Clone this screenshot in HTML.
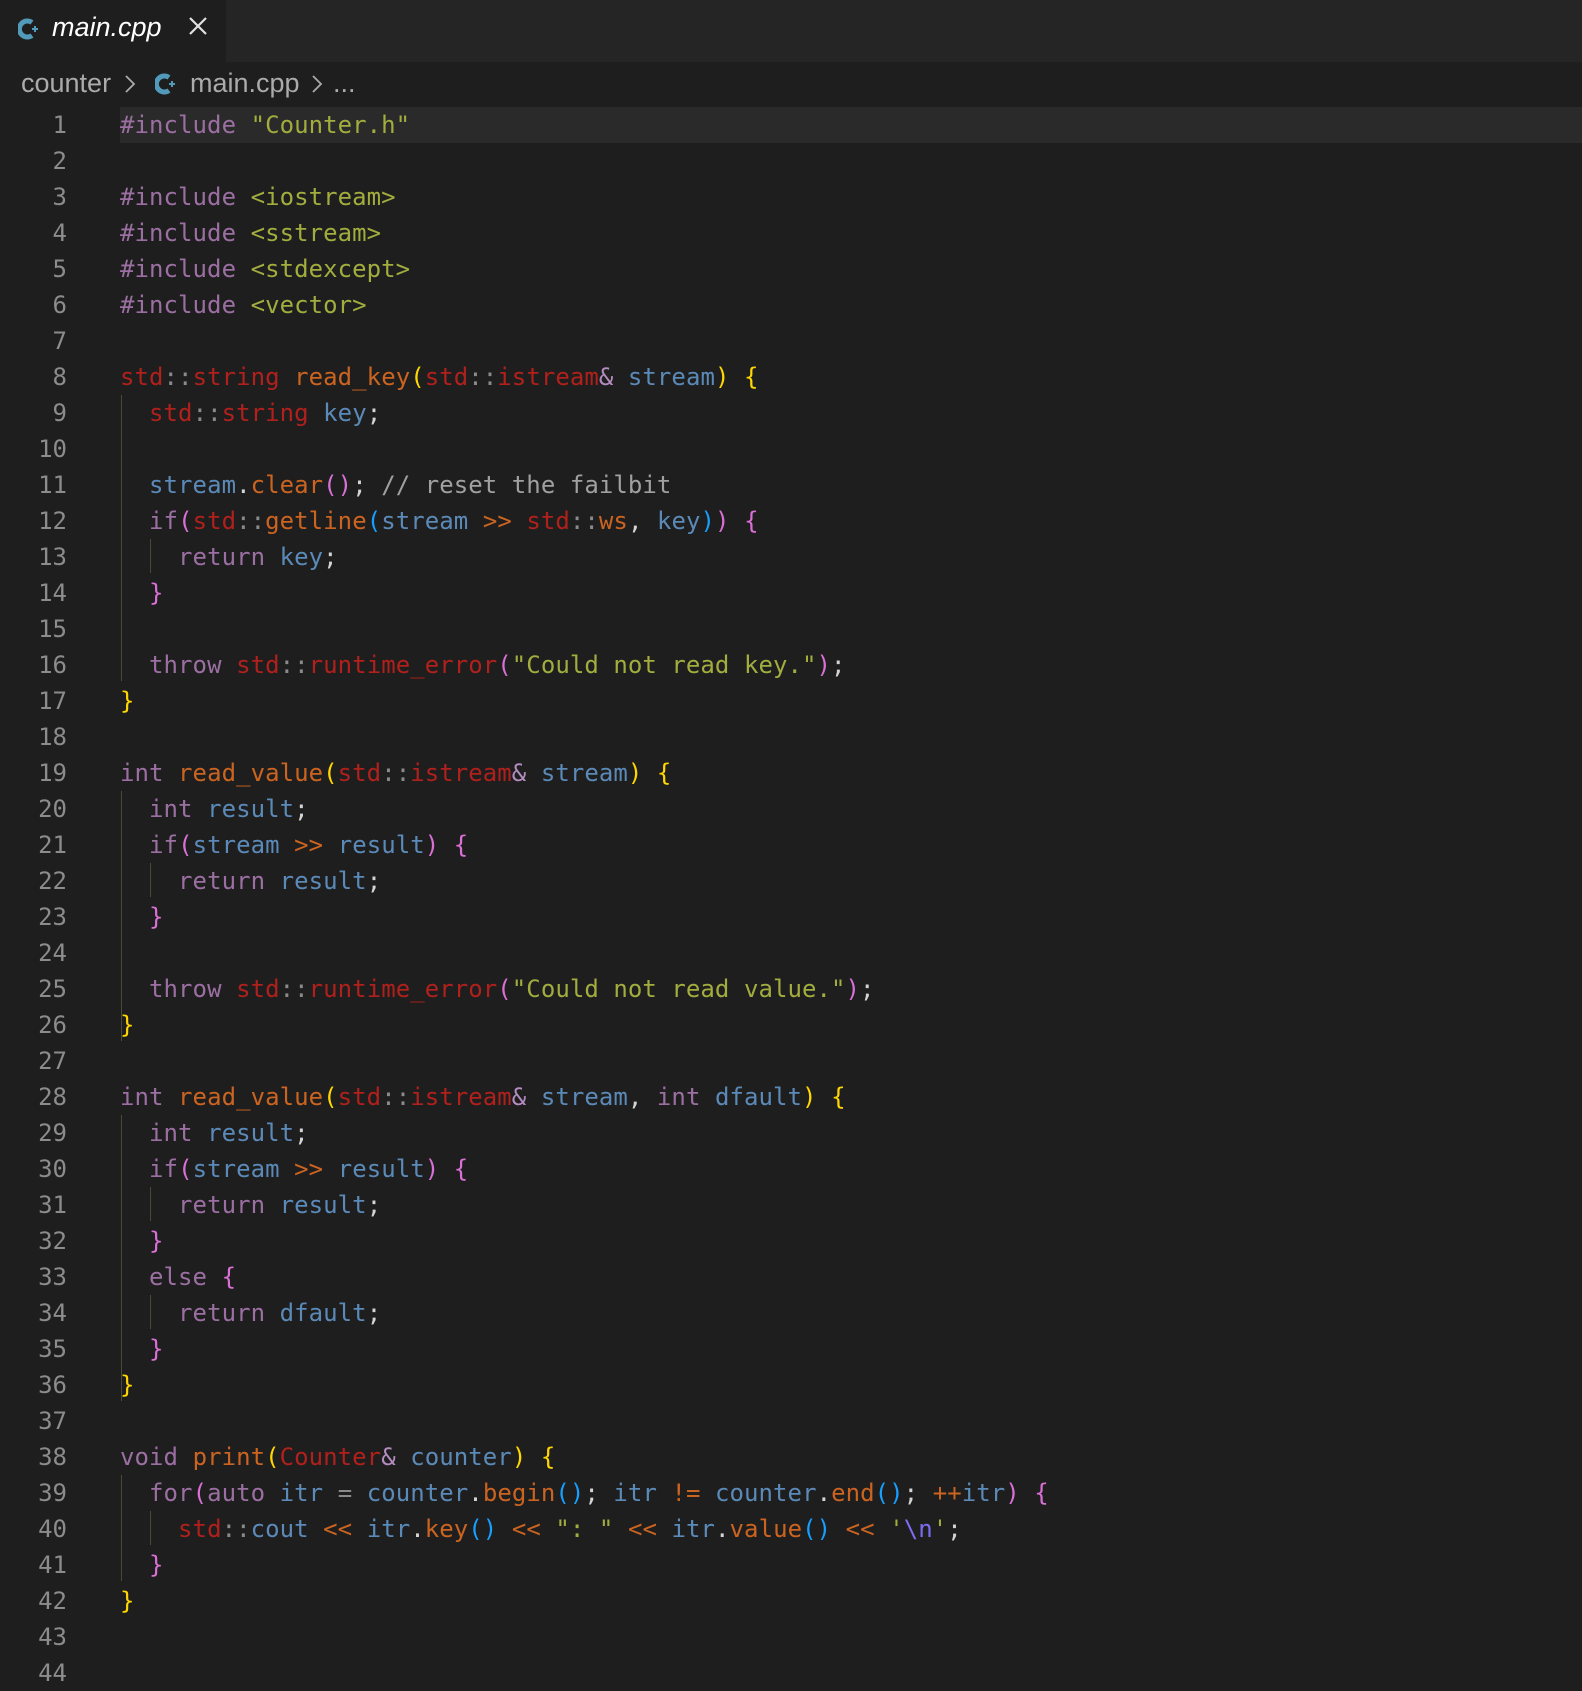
<!DOCTYPE html>
<html><head><meta charset="utf-8"><style>
*{margin:0;padding:0;box-sizing:border-box}
html,body{width:1582px;height:1680px;background:#1e1e1e;overflow:hidden}
.tabs{position:absolute;left:0;top:0;width:1582px;height:62px;background:#252526}
.tab{position:absolute;left:0;top:0;width:226px;height:62px;background:#1e1e1e}
.tab .name{position:absolute;left:52px;top:12px;font:italic 27px "Liberation Sans",sans-serif;color:#fff}
.tab .x{position:absolute;left:186px;top:14px;width:24px;height:24px}
.bc{position:absolute;top:68px;font:27px "Liberation Sans",sans-serif;color:#ababab;white-space:pre}
.ln{position:absolute;left:0;width:67px;text-align:right;font:24px "DejaVu Sans Mono",monospace;color:#8c8c8c;line-height:36px}
.code{position:absolute;left:120px;font:24px "DejaVu Sans Mono",monospace;line-height:36px;white-space:pre;color:#d4d4d4;letter-spacing:0.06px}
.hl{position:absolute;left:120px;top:107px;width:1462px;height:36px;background:#2a2a2a}
.g{position:absolute;width:1px;background:#4a4a38}
.k{color:#9c6fa3}.s{color:#a2ad3e}.r{color:#b0201c}.f{color:#cb6420}.v{color:#5b8ab8}.c{color:#a0a0a0}
.y{color:#ffd700}.p{color:#da70d6}.b{color:#179fff}.o{color:#cb6420}.e{color:#8a8a8a}.n{color:#7c6cf0}.a{color:#b48cc0}
</style></head><body>
<div class="tabs"><div class="tab">
<svg style="position:absolute;left:18px;top:17px" width="24" height="24" viewBox="0 0 24 24"><path d="M14 5.5A8 8 0 1 0 14 18.5" fill="none" stroke="#519aba" stroke-width="5"/><path d="M14 12h6M17 9v6" stroke="#519aba" stroke-width="2"/></svg>
<div class="name">main.cpp</div>
<svg class="x" viewBox="0 0 24 24"><path d="M4 4L20 20M20 4L4 20" stroke="#e0e0e0" stroke-width="2.2"/></svg>
</div></div>
<div class="bc" style="left:21px">counter</div>
<svg style="position:absolute;left:124px;top:74px" width="12" height="20" viewBox="0 0 12 20"><path d="M2 2l8 8-8 8" fill="none" stroke="#ababab" stroke-width="1.8"/></svg>
<svg style="position:absolute;left:155px;top:72px" width="24" height="24" viewBox="0 0 24 24"><path d="M14 5.5A8 8 0 1 0 14 18.5" fill="none" stroke="#519aba" stroke-width="5"/><path d="M14 12h6M17 9v6" stroke="#519aba" stroke-width="2"/></svg>
<div class="bc" style="left:190px">main.cpp</div>
<svg style="position:absolute;left:311px;top:74px" width="12" height="20" viewBox="0 0 12 20"><path d="M2 2l8 8-8 8" fill="none" stroke="#ababab" stroke-width="1.8"/></svg>
<div class="bc" style="left:333px">...</div>
<div class="hl"></div>
<div class="g" style="left:121px;top:395px;height:286px"></div>
<div class="g" style="left:150px;top:539px;height:34px"></div>
<div class="g" style="left:121px;top:791px;height:250px"></div>
<div class="g" style="left:150px;top:863px;height:34px"></div>
<div class="g" style="left:121px;top:1115px;height:286px"></div>
<div class="g" style="left:150px;top:1187px;height:34px"></div>
<div class="g" style="left:150px;top:1295px;height:34px"></div>
<div class="g" style="left:121px;top:1475px;height:106px"></div>
<div class="g" style="left:150px;top:1511px;height:34px"></div>
<div class="ln" style="top:107px">1<br>2<br>3<br>4<br>5<br>6<br>7<br>8<br>9<br>10<br>11<br>12<br>13<br>14<br>15<br>16<br>17<br>18<br>19<br>20<br>21<br>22<br>23<br>24<br>25<br>26<br>27<br>28<br>29<br>30<br>31<br>32<br>33<br>34<br>35<br>36<br>37<br>38<br>39<br>40<br>41<br>42<br>43<br>44</div>
<div class="code" style="top:107px"><span class="k">#include</span> <span class="s">"Counter.h"</span>

<span class="k">#include</span> <span class="s">&lt;iostream&gt;</span>
<span class="k">#include</span> <span class="s">&lt;sstream&gt;</span>
<span class="k">#include</span> <span class="s">&lt;stdexcept&gt;</span>
<span class="k">#include</span> <span class="s">&lt;vector&gt;</span>

<span class="r">std</span><span class="e">::</span><span class="r">string</span> <span class="f">read_key</span><span class="y">(</span><span class="r">std</span><span class="e">::</span><span class="r">istream</span><span class="a">&amp;</span> <span class="v">stream</span><span class="y">)</span> <span class="y">{</span>
  <span class="r">std</span><span class="e">::</span><span class="r">string</span> <span class="v">key</span>;

  <span class="v">stream</span>.<span class="f">clear</span><span class="p">()</span>; <span class="c">// reset the failbit</span>
  <span class="k">if</span><span class="p">(</span><span class="r">std</span><span class="e">::</span><span class="f">getline</span><span class="b">(</span><span class="v">stream</span> <span class="o">&gt;&gt;</span> <span class="r">std</span><span class="e">::</span><span class="f">ws</span>, <span class="v">key</span><span class="b">)</span><span class="p">)</span> <span class="p">{</span>
    <span class="k">return</span> <span class="v">key</span>;
  <span class="p">}</span>

  <span class="k">throw</span> <span class="r">std</span><span class="e">::</span><span class="r">runtime_error</span><span class="p">(</span><span class="s">"Could not read key."</span><span class="p">)</span>;
<span class="y">}</span>

<span class="k">int</span> <span class="f">read_value</span><span class="y">(</span><span class="r">std</span><span class="e">::</span><span class="r">istream</span><span class="a">&amp;</span> <span class="v">stream</span><span class="y">)</span> <span class="y">{</span>
  <span class="k">int</span> <span class="v">result</span>;
  <span class="k">if</span><span class="p">(</span><span class="v">stream</span> <span class="o">&gt;&gt;</span> <span class="v">result</span><span class="p">)</span> <span class="p">{</span>
    <span class="k">return</span> <span class="v">result</span>;
  <span class="p">}</span>

  <span class="k">throw</span> <span class="r">std</span><span class="e">::</span><span class="r">runtime_error</span><span class="p">(</span><span class="s">"Could not read value."</span><span class="p">)</span>;
<span class="y">}</span>

<span class="k">int</span> <span class="f">read_value</span><span class="y">(</span><span class="r">std</span><span class="e">::</span><span class="r">istream</span><span class="a">&amp;</span> <span class="v">stream</span>, <span class="k">int</span> <span class="v">dfault</span><span class="y">)</span> <span class="y">{</span>
  <span class="k">int</span> <span class="v">result</span>;
  <span class="k">if</span><span class="p">(</span><span class="v">stream</span> <span class="o">&gt;&gt;</span> <span class="v">result</span><span class="p">)</span> <span class="p">{</span>
    <span class="k">return</span> <span class="v">result</span>;
  <span class="p">}</span>
  <span class="k">else</span> <span class="p">{</span>
    <span class="k">return</span> <span class="v">dfault</span>;
  <span class="p">}</span>
<span class="y">}</span>

<span class="k">void</span> <span class="f">print</span><span class="y">(</span><span class="r">Counter</span><span class="a">&amp;</span> <span class="v">counter</span><span class="y">)</span> <span class="y">{</span>
  <span class="k">for</span><span class="p">(</span><span class="k">auto</span> <span class="v">itr</span> <span class="e">=</span> <span class="v">counter</span>.<span class="f">begin</span><span class="b">()</span>; <span class="v">itr</span> <span class="o">!=</span> <span class="v">counter</span>.<span class="f">end</span><span class="b">()</span>; <span class="o">++</span><span class="v">itr</span><span class="p">)</span> <span class="p">{</span>
    <span class="r">std</span><span class="e">::</span><span class="v">cout</span> <span class="o">&lt;&lt;</span> <span class="v">itr</span>.<span class="f">key</span><span class="b">()</span> <span class="o">&lt;&lt;</span> <span class="s">": "</span> <span class="o">&lt;&lt;</span> <span class="v">itr</span>.<span class="f">value</span><span class="b">()</span> <span class="o">&lt;&lt;</span> <span class="s">'</span><span class="n">\n</span><span class="s">'</span>;
  <span class="p">}</span>
<span class="y">}</span>

</div>
</body></html>
